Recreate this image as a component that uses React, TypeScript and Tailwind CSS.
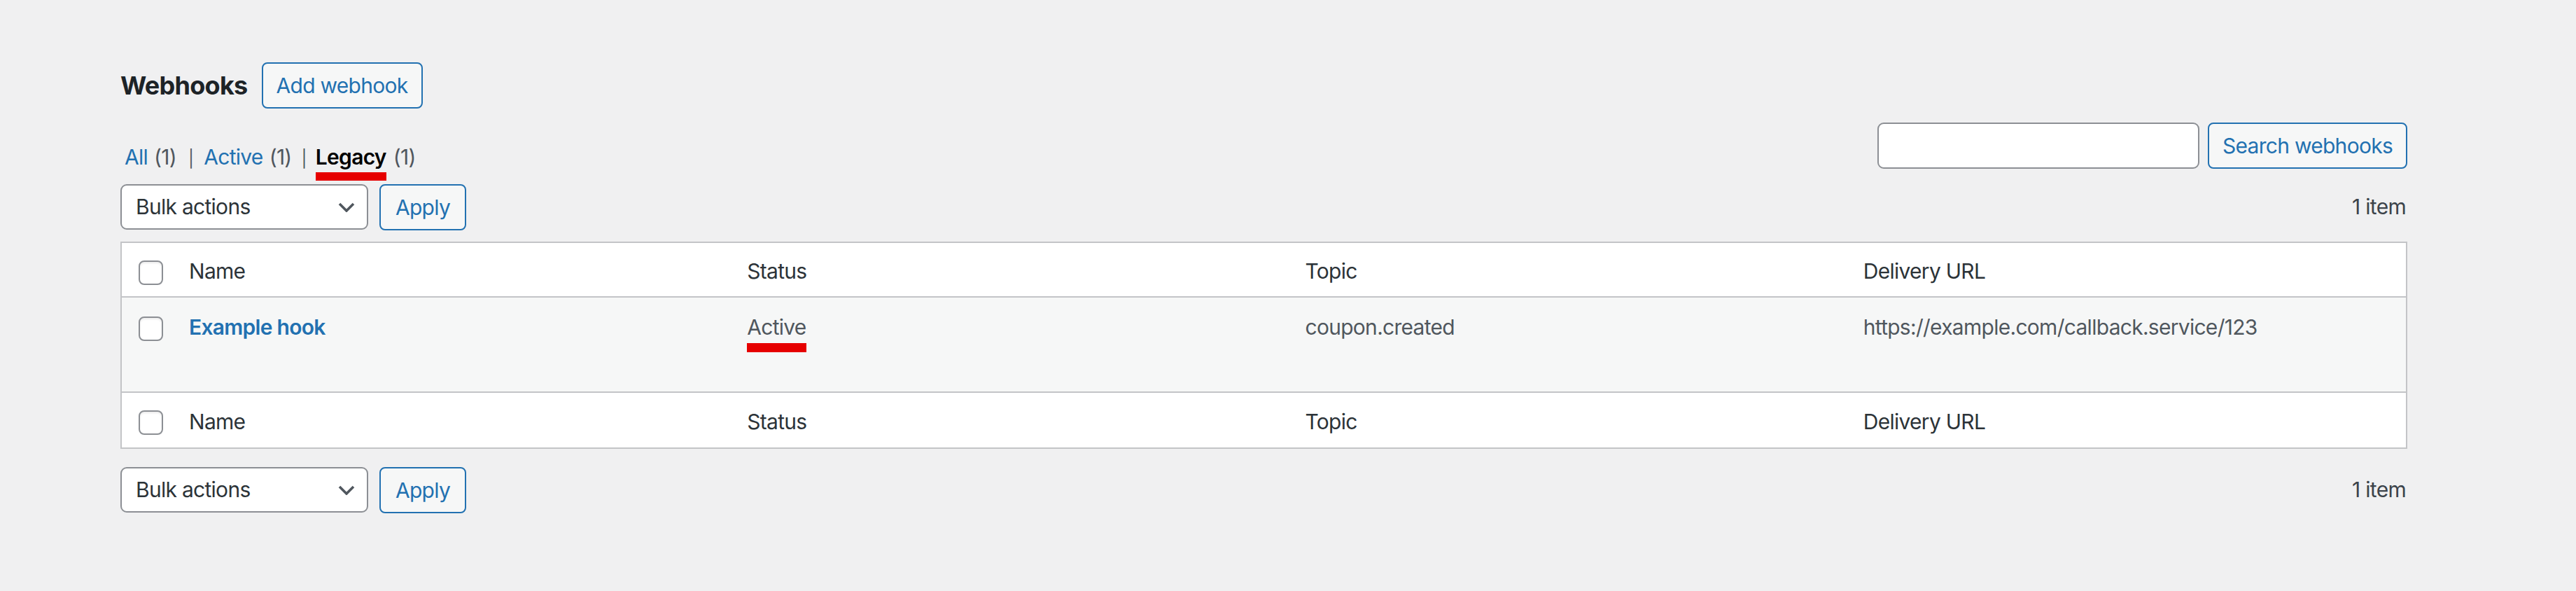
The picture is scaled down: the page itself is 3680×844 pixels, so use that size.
const font = "font-['Inter','Noto_Sans',sans-serif]";

const columns = ['Name', 'Status', 'Topic', 'Delivery URL'];

function Checkbox() {
  return (
    <div className="w-[35px] h-[35px] rounded-[8px] border-2 border-[#8c8f94] bg-white shadow-[inset_0_2px_3px_rgba(0,0,0,0.08)]" />
  );
}

function Button({ children, className = '' }: { children: React.ReactNode; className?: string }) {
  return (
    <button
      className={`h-[66px] border-2 border-[#2271b1] rounded-[8px] bg-[#f6f7f7] text-[#2271b1] text-[30px] leading-none ${className}`}
    >
      {children}
    </button>
  );
}

function Sep() {
  return <span className="text-[24px] text-[#50575e] leading-[40px] pt-[2px]">|</span>;
}

function Tablenav() {
  return (
    <div className="flex items-center justify-between h-[65px]">
      <div className="flex items-center gap-[16px]">
        <div className="w-[354px] h-[65px] flex items-center justify-between pl-[20px] pr-[17px] border-2 border-[#8c8f94] rounded-[9px] bg-white text-[#2c3338] text-[30px]">
          <span>Bulk actions</span>
          <svg viewBox="0 0 24 14" className="w-[24px] h-[14px]" fill="none">
            <polyline points="2,2 12,12 22,2" stroke="#50575e" strokeWidth="3.6" />
          </svg>
        </div>
        <Button className="w-[124px] h-[65px]">Apply</Button>
      </div>
      <span className="text-[30px] text-[#3c434a] pr-[2px]">1 item</span>
    </div>
  );
}

function HeadRow({ last }: { last?: boolean }) {
  return (
    <div
      className={`grid grid-cols-[74px_repeat(4,minmax(0,1fr))] h-[78px] bg-white text-[#2c3338] ${last ? '' : 'border-b-2 border-[#c3c4c7]'}`}
    >
      <div className="pl-[24px] pt-[25px]">
        <Checkbox />
      </div>
      {columns.map((c) => (
        <div key={c} className="px-[22px] pt-[3px] flex items-center leading-[40px]">
          {c}
        </div>
      ))}
    </div>
  );
}

export default function App() {
  return (
    <div className={`min-h-[844px] bg-[#f0f0f1] pl-[172px] pr-[241px] pt-[89px] tracking-[-0.045em] ${font}`}>
      {/* Title */}
      <div className="flex items-center h-[66px]">
        <h2 className="text-[36px] font-bold text-[#1d2327] leading-none">Webhooks</h2>
        <Button className="ml-[20px] w-[230px]">Add webhook</Button>
      </div>

      {/* Views + search */}
      <div className="flex items-start justify-between h-[66px] mt-[20px]">
        <ul className="flex items-start mt-[29px] text-[30px] leading-[40px] text-[#50575e]">
          <li className="flex items-start">
            <a className="text-[#2271b1] ml-[6px]">All</a>
            <span className="ml-[9px]">(1)</span>
            <span className="ml-[17px]">
              <Sep />
            </span>
          </li>
          <li className="flex items-start ml-[15px]">
            <a className="text-[#2271b1]">Active</a>
            <span className="ml-[9px]">(1)</span>
            <span className="ml-[14px]">
              <Sep />
            </span>
          </li>
          <li className="flex items-start ml-[13px]">
            <span className="inline-flex flex-col">
              <span className="text-black font-semibold">Legacy</span>
              <span className="h-[12px] mt-[2px] bg-[#e60000]" />
            </span>
            <span className="ml-[10px]">(1)</span>
          </li>
        </ul>
        <div className="flex items-center gap-[12px]">
          <input
            type="text"
            className="w-[460px] h-[66px] border-2 border-[#8c8f94] rounded-[9px] bg-white outline-none"
          />
          <Button className="w-[285px]">Search webhooks</Button>
        </div>
      </div>

      <div className="mt-[22px]">
        <Tablenav />
      </div>

      {/* Table */}
      <div className="mt-[17px] border-2 border-[#c3c4c7] text-[30px]">
        <HeadRow />
        <div className="grid grid-cols-[74px_repeat(4,minmax(0,1fr))] h-[136px] bg-[#f6f7f7] border-b-2 border-[#c3c4c7] text-[#50575e] leading-[46px]">
          <div className="pl-[24px] pt-[27px]">
            <Checkbox />
          </div>
          <div className="px-[22px] pt-[19px]">
            <a className="text-[#2271b1] font-semibold">Example hook</a>
          </div>
          <div className="px-[22px] pt-[19px]">
            <span className="inline-flex flex-col">
              <span>Active</span>
              <span className="h-[13px] bg-[#e60000]" />
            </span>
          </div>
          <div className="px-[22px] pt-[19px]">coupon.created</div>
          <div className="px-[22px] pt-[19px]">https://example.com/callback.service/123</div>
        </div>
        <HeadRow last />
      </div>

      <div className="mt-[26px]">
        <Tablenav />
      </div>
    </div>
  );
}
